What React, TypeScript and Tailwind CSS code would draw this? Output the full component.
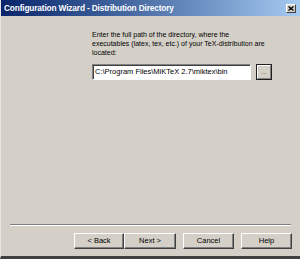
import React from 'react';

const font = { fontFamily: '"Liberation Sans", Arial, sans-serif' };

const Button: React.FC<{ label: string; className?: string }> = ({ label, className = '' }) => (
  <button
    className={`h-[16px] bg-[#d4d0c8] border border-t-white border-l-white border-r-[#404040] border-b-[#404040] shadow-[inset_-1px_-1px_0_#808080] text-[7.5px] text-black leading-none ${className}`}
  >
    {label}
  </button>
);

export default function App() {
  return (
    <div
      className="w-[300px] h-[259px] bg-[#d4d0c8] flex flex-col border-l border-l-[#e8e6e0] border-b-[3px] border-b-[#404040] overflow-hidden"
      style={font}
    >
      {/* Title bar */}
      <div className="h-[16px] flex items-center justify-between pl-[3px] pr-[4px] bg-gradient-to-r from-[#0a246a] to-[#a6caf0]">
        <span className="text-white font-bold text-[8.3px] tracking-[-0.15px]">
          Configuration Wizard - Distribution Directory
        </span>
        <div className="w-[10px] h-[9px] bg-[#d4d0c8] border border-t-white border-l-white border-r-[#404040] border-b-[#404040] flex items-center justify-center">
          <svg width="6" height="5" viewBox="0 0 6 5">
            <path d="M0.5 0.5L5.5 4.5M5.5 0.5L0.5 4.5" stroke="black" strokeWidth="1.3" />
          </svg>
        </div>
      </div>

      {/* Content */}
      <div className="flex-1 pl-[91px] pt-[14px]">
        <p className="text-[7px] leading-[9px] text-black whitespace-nowrap">
          Enter the full path of the directory, where the
          <br />
          executables (latex, tex, etc.) of your TeX-distribution are
          <br />
          located:
        </p>
        <div className="flex items-center gap-[5px] mt-[7px]">
          <div className="w-[159px] h-[16px] bg-white border border-t-[#808080] border-l-[#808080] border-r-white border-b-white shadow-[inset_1px_1px_0_#404040] flex items-center pl-[2px] text-[7.5px] text-black">
            C:\Program Files\MiKTeX 2.7\miktex\bin
          </div>
          <div className="w-[16px] h-[16px] bg-[#d4d0c8] border border-[#202020] flex items-center justify-center">
            <div className="w-[14px] h-[14px] border border-t-white border-l-white border-r-[#808080] border-b-[#808080] flex items-end justify-center pb-[3px] text-[6px] text-[#404040] leading-none">
              ...
            </div>
          </div>
        </div>
      </div>

      {/* Separator */}
      <div className="mx-[9px] border-t border-t-[#808080] border-b border-b-white" />

      {/* Buttons */}
      <div className="h-[30px] flex items-start pt-[7px] pl-[73px]">
        <Button label="< Back" className="w-[50px]" />
        <Button label="Next >" className="w-[52px]" />
        <Button label="Cancel" className="w-[51px] ml-[7px]" />
        <Button label="Help" className="w-[51px] ml-[7px]" />
      </div>
    </div>
  );
}
